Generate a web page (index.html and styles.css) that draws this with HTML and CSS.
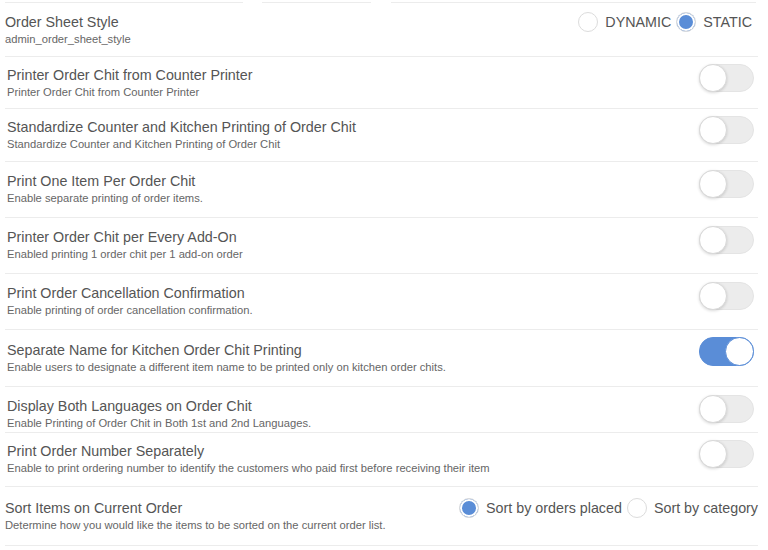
FILE: index.html
```html
<!doctype html>
<html lang="en">
  <head>
    <meta charset="UTF-8" />
    <meta name="viewport" content="width=device-width, initial-scale=1.0" />
    <title>Order Chit Settings</title>
    <link rel="stylesheet" href="styles.css">
  </head>
  <body>
    <div class="settings">
      <!-- tail of the section above -->
      <div class="prev-fields">
        <span class="prev-field f1"></span>
        <span class="prev-field f2"></span>
        <span class="prev-field f3"></span>
      </div>

      <div class="setting row-1">
        <div class="label">
          <div class="title">Order Sheet Style</div>
          <div class="desc">admin_order_sheet_style</div>
        </div>
        <div class="radios">
          <span class="radio"></span><span class="radio-text">DYNAMIC</span>
          <span class="radio checked"></span><span class="radio-text">STATIC</span>
        </div>
      </div>

      <div class="setting row-2 inset">
        <div class="label">
          <div class="title">Printer Order Chit from Counter Printer</div>
          <div class="desc">Printer Order Chit from Counter Printer</div>
        </div>
        <span class="switch"></span>
      </div>

      <div class="setting row-3 inset">
        <div class="label">
          <div class="title">Standardize Counter and Kitchen Printing of Order Chit</div>
          <div class="desc">Standardize Counter and Kitchen Printing of Order Chit</div>
        </div>
        <span class="switch"></span>
      </div>

      <div class="setting row-4 inset">
        <div class="label">
          <div class="title">Print One Item Per Order Chit</div>
          <div class="desc">Enable separate printing of order items.</div>
        </div>
        <span class="switch"></span>
      </div>

      <div class="setting row-5 inset">
        <div class="label">
          <div class="title">Printer Order Chit per Every Add-On</div>
          <div class="desc">Enabled printing 1 order chit per 1 add-on order</div>
        </div>
        <span class="switch"></span>
      </div>

      <div class="setting row-6 inset">
        <div class="label">
          <div class="title">Print Order Cancellation Confirmation</div>
          <div class="desc">Enable printing of order cancellation confirmation.</div>
        </div>
        <span class="switch"></span>
      </div>

      <div class="setting row-7 inset">
        <div class="label">
          <div class="title">Separate Name for Kitchen Order Chit Printing</div>
          <div class="desc">Enable users to designate a different item name to be printed only on kitchen order chits.</div>
        </div>
        <span class="switch on"></span>
      </div>

      <div class="setting row-8 inset">
        <div class="label">
          <div class="title">Display Both Languages on Order Chit</div>
          <div class="desc">Enable Printing of Order Chit in Both 1st and 2nd Languages.</div>
        </div>
        <span class="switch"></span>
      </div>

      <div class="setting row-9 inset">
        <div class="label">
          <div class="title">Print Order Number Separately</div>
          <div class="desc">Enable to print ordering number to identify the customers who paid first before receiving their item</div>
        </div>
        <span class="switch"></span>
      </div>

      <div class="setting row-10">
        <div class="label">
          <div class="title">Sort Items on Current Order</div>
          <div class="desc">Determine how you would like the items to be sorted on the current order list.</div>
        </div>
        <div class="radios">
          <span class="radio checked"></span><span class="radio-text">Sort by orders placed</span>
          <span class="radio"></span><span class="radio-text">Sort by category</span>
        </div>
      </div>
    </div>
  </body>
</html>
```

FILE: styles.css
```css
:root {
  --text-color: #555;
  --muted-color: #666;
  --line-color: #ececec;
  --accent-color: #5a8dd7;
  --track-color: #ececec;
}

body {
  margin: 0;
  background: #fff;
  font-family: "Liberation Sans", Arial, sans-serif;
  color: var(--text-color);
}

.settings {
  width: 753px;
  padding-left: 5px;
}

/* Bottom edge of the previous section */
.prev-fields {
  display: flex;
  height: 3px;
}

.prev-field {
  border-bottom: 1px solid var(--line-color);
}

.f1 { width: 238px; }
.f2 { width: 109px; margin-left: 19px; }
.f3 { width: 365px; margin-left: 20px; }

/* Setting rows */
.setting {
  display: flex;
  justify-content: space-between;
  align-items: flex-start;
  border-bottom: 1px solid var(--line-color);
}

.setting.inset {
  padding-left: 2px;
}

.title {
  font-size: 14.3px;
  line-height: 20px;
}

.desc {
  font-size: 11.2px;
  line-height: 15px;
  color: var(--muted-color);
}

.row-1 { padding: 9px 0 9px; }
.row-2 { padding: 8px 0 8px; }
.row-3 { padding: 8px 0 9px; }
.row-4 { padding: 9px 0 11px; }
.row-5 { padding: 9px 0 11px; }
.row-6 { padding: 9px 0 11px; }
.row-7 { padding: 10px 0 11px; }
.row-8 { padding: 9px 0 1px; }
.row-9 { padding: 8px 0 10px; }
.row-10 { padding: 11px 0 12px; }

/* Radio groups */
.radios {
  display: flex;
  align-items: center;
  height: 20px;
  padding-right: 6px;
  font-size: 14.3px;
}

.row-10 .radios {
  padding-right: 0;
}

.radio {
  box-sizing: border-box;
  width: 20px;
  height: 20px;
  border: 1px solid #dcdcdc;
  border-radius: 50%;
  background: #fff;
  margin-left: 5px;
}

.radio.checked {
  background: var(--accent-color);
  box-shadow: inset 0 0 0 2px #fff;
}

.radio-text {
  margin-left: 7px;
}

/* Switches */
.switch {
  position: relative;
  box-sizing: border-box;
  width: 55px;
  height: 28px;
  margin: -1px 4px 0 0;
  border: 1px solid #e4e4e4;
  border-radius: 14px;
  background: var(--track-color);
  flex-shrink: 0;
}

.switch::after {
  content: "";
  position: absolute;
  top: -1px;
  left: -1px;
  box-sizing: border-box;
  width: 28px;
  height: 28px;
  border: 1px solid #d9d9d9;
  border-radius: 50%;
  background: #fff;
  box-shadow: 0 1px 3px rgba(0, 0, 0, 0.15);
}

.switch.on {
  height: 29px;
  margin-top: -3px;
  border-color: var(--accent-color);
  background: var(--accent-color);
}

.switch.on::after {
  left: auto;
  right: -1px;
  height: 29px;
  width: 29px;
  border-color: var(--accent-color);
  box-shadow: none;
}
```
